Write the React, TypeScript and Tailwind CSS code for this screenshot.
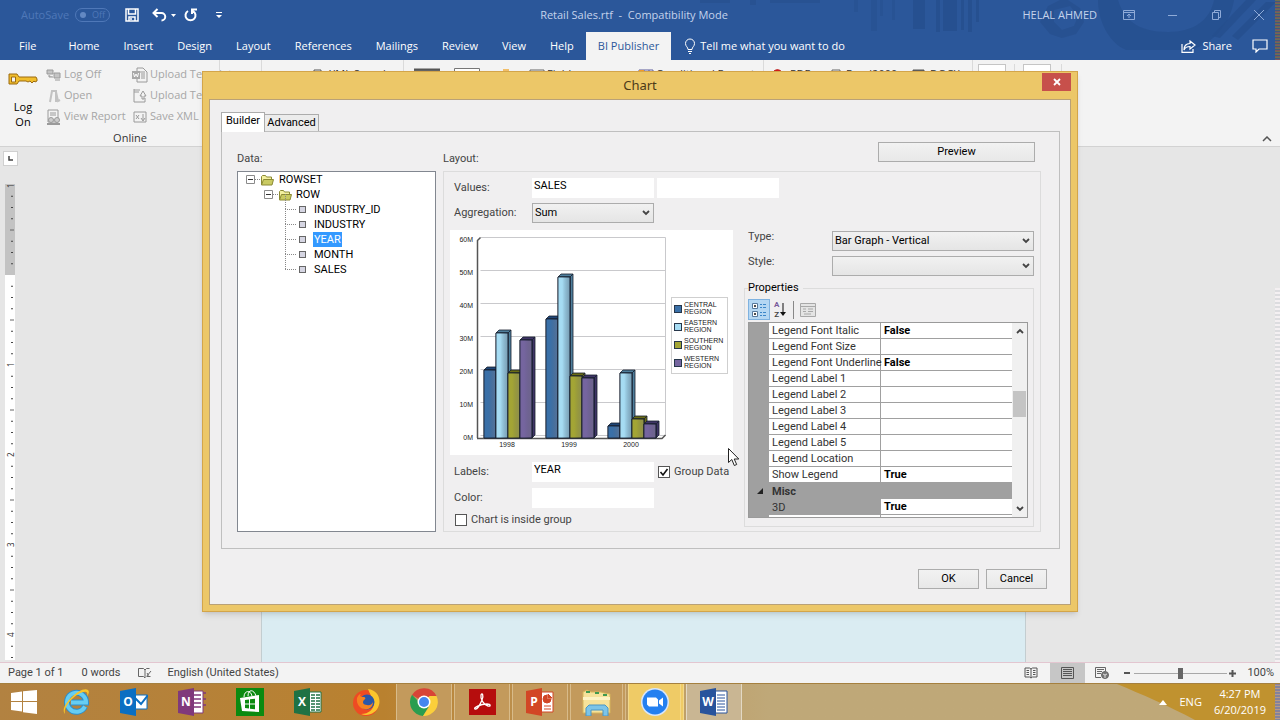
import type { ReactNode } from "react";

const MENU_TABS = ["Home", "Insert", "Design", "Layout", "References", "Mailings", "Review", "View", "Help"];

const TREE_LEAVES = ["INDUSTRY_ID", "INDUSTRY", "YEAR", "MONTH", "SALES"];

const PROPERTIES = [
  { name: "Legend Font Italic", value: "False" },
  { name: "Legend Font Size", value: "" },
  { name: "Legend Font Underline", value: "False" },
  { name: "Legend Label 1", value: "" },
  { name: "Legend Label 2", value: "" },
  { name: "Legend Label 3", value: "" },
  { name: "Legend Label 4", value: "" },
  { name: "Legend Label 5", value: "" },
  { name: "Legend Location", value: "" },
  { name: "Show Legend", value: "True" },
];

const SERIES = [
  { name: "CENTRAL", light: "#3a70a8", dark: "#1f4677" },
  { name: "EASTERN", light: "#a6dcf3", dark: "#4f7f9c" },
  { name: "SOUTHERN", light: "#a3a535", dark: "#6a6c14" },
  { name: "WESTERN", light: "#75659f", dark: "#3f3466" },
];

const CHART_GROUPS = [
  { year: "1998", x: 34, tops: [140, 103, 143, 110] },
  { year: "1999", x: 96, tops: [89, 47, 146, 148] },
  { year: "2000", x: 158, tops: [196, 143, 189, 194] },
];

function BarChart() {
  return (
    <svg width="283" height="225" viewBox="0 0 283 225" className="block bg-white" role="img" aria-label="Bar graph">
      <defs>
        {SERIES.map((s) => (
          <linearGradient id={s.name} key={s.name}>
            <stop offset="0" stopColor={s.light} />
            <stop offset="0.35" stopColor={s.light} />
            <stop offset="1" stopColor={s.dark} stopOpacity="0.75" />
          </linearGradient>
        ))}
      </defs>
      <g stroke="#c9c9cc" fill="none">
        <path d="M30.5 7.5H215.5V205.5" />
        {[40, 73, 106, 139, 172, 205].map((y) => (
          <path key={y} d={`M30.5 ${y + 0.5}H215.5`} />
        ))}
      </g>
      <path d="M30.5 7.5L27.5 10.5V208" stroke="#555" fill="none" strokeWidth="1.5" />
      <path d="M27 208.5H212L215.5 205" stroke="#555" fill="none" strokeWidth="1.5" />
      {CHART_GROUPS.map((group) =>
        SERIES.map((s, i) => {
          const x = group.x + i * 12;
          const top = group.tops[i];
          return (
            <g key={group.year + s.name} stroke="#16202e" strokeWidth="0.8" strokeLinejoin="round">
              <path d={`M${x} ${top}L${x + 3} ${top - 3}H${x + 15}L${x + 12} ${top}Z`} fill={s.dark} />
              <path d={`M${x + 12} ${top}L${x + 15} ${top - 3}V205L${x + 12} 208Z`} fill={s.dark} />
              <path d={`M${x} ${top}H${x + 12}V208H${x}Z`} fill="#fff" />
              <path d={`M${x} ${top}H${x + 12}V208H${x}Z`} fill={`url(#${s.name})`} />
            </g>
          );
        })
      )}
      <g fontFamily="Liberation Sans, sans-serif" fontSize="7" fill="#222">
        {["60M", "50M", "40M", "30M", "20M", "10M", "0M"].map((t, i) => (
          <text key={t} x="23" y={12 + i * 33} textAnchor="end">
            {t}
          </text>
        ))}
        {CHART_GROUPS.map((g) => (
          <text key={g.year} x={g.x + 23} y="217" textAnchor="middle">
            {g.year}
          </text>
        ))}
        <rect x="221.5" y="67.5" width="56" height="76" fill="#fff" stroke="#cfcfcf" />
        {SERIES.map((s, i) => (
          <g key={s.name}>
            <rect x="224.5" y={75.5 + i * 18} width="7" height="7" fill={s.light} stroke="#26364a" />
            <text x="234" y={77 + i * 18}>
              {s.name}
            </text>
            <text x="234" y={84 + i * 18}>
              REGION
            </text>
          </g>
        ))}
      </g>
    </svg>
  );
}

function VerticalRuler() {
  const ticks: number[] = [];
  for (let i = 1; i < 43; i++) ticks.push(i);
  const numbers: Record<number, string> = { 16: "1", 24: "2", 32: "3", 40: "4" };
  return (
    <svg width="10" height="476" viewBox="0 0 10 476" className="block">
      <rect width="10" height="91" fill="#c3c3c3" />
      <rect y="91" width="10" height="385" fill="#fff" />
      {ticks.map((i) => {
        const y = 1 + i * 11.25;
        if (i === 8) return null;
        if (numbers[i]) {
          return (
            <text key={i} transform={`translate(9 ${y + 2}) rotate(-90)`} fontSize="8" fontFamily="Noto Sans, sans-serif" fill="#333">
              {numbers[i]}
            </text>
          );
        }
        return i % 4 === 0 ? (
          <path key={i} d={`M5 ${y}h4`} stroke="#666" />
        ) : (
          <path key={i} d={`M6 ${y}h2`} stroke="#444" />
        );
      })}
      <text transform="translate(9 4) rotate(-90)" fontSize="8" fontFamily="Noto Sans, sans-serif" fill="#333">
        1
      </text>
    </svg>
  );
}

function TitleArt() {
  return (
    <svg width="640" height="60" viewBox="0 0 640 60" className="absolute top-0 right-0" fill="#264f8d" aria-hidden="true">
      <path d="M60 0h30v3h-30zM110 0h6v5h-6zM130 0h50v3h-50z" opacity=".6" />
      <path d="M214 0h4v12h-4zM231 0h6v31h-6zM240 0h3v16h-3zM252 0h3v20h-3z" opacity=".5" />
      <path d="M273 0h12v29h-12zM296 0h4v32h-4zM303 0h14v31h-14zM321 0h3v30h-3zM328 0h4v32h-4zM336 0h3v22h-3z" opacity=".8" />
      <path d="M408 6l12-6h8l12 8 4 14-8 12-14 4-12-4-10-12z M414 10v12l8 8 12-4 4-10-8-10z" fillRule="evenodd" opacity=".7" />
      <path d="M458 0c0 20 10 42 28 50h64c24-6 40-26 44-50h-20c-4 20-20 32-46 32-30 0-44-12-50-32z" opacity=".75" />
      <path d="M572 36l34-36h10l-36 38zM592 36l34-34h10l-38 38z" opacity=".8" />
    </svg>
  );
}

function TitleBar() {
  return (
    <div className="relative flex h-[30px] items-center text-[11px] text-[#c4d3ec]">
      <div className="flex flex-1 items-center pl-[21px] text-white">
        <label htmlFor="autosave" className="text-[#4f78b8]">
          AutoSave
        </label>
        <button id="autosave" className="ml-1.5 flex h-[14px] w-[35px] items-center justify-between rounded-full border border-[#4f78b8] px-1 text-[9px] text-[#4f78b8]">
          <span className="size-1.5 rounded-full bg-[#6288c3]" />
          Off
        </button>
        <button aria-label="Save" className="ml-[15px]">
          <svg width="14" height="14" viewBox="0 0 14 14" fill="none" stroke="white" strokeWidth="1.5">
            <path d="M1 1h12v12H1zM3.500 1v5h7V1M4 13V9h6v4M6 10v2" />
          </svg>
        </button>
        <button aria-label="Undo" className="ml-[13px]">
          <svg width="15" height="14" viewBox="0 0 15 14" fill="none" stroke="white" strokeWidth="2">
            <path d="M5.500 1L1.500 5l4 4M2 5h7.500a3.700 3.700 0 0 1 0 7.500" />
          </svg>
        </button>
        <svg width="5" height="3" viewBox="0 0 5 3" className="ml-1" fill="white">
          <path d="M0 0h5L2.500 3z" />
        </svg>
        <button aria-label="Redo" className="ml-2">
          <svg width="14" height="14" viewBox="0 0 14 14" fill="none" stroke="white" strokeWidth="2">
            <path d="M4 3a5 5 0 1 0 5 0M8 6V1.500h5" />
          </svg>
        </button>
        <svg width="6" height="7" viewBox="0 0 6 7" className="ml-[18px]" fill="white">
          <path d="M0 0h6v1H0zM0 3h6L3 6z" />
        </svg>
      </div>
      <span className="pr-[18px] whitespace-pre">Retail Sales.rtf  -  Compatibility Mode</span>
      <div className="flex flex-1 items-center justify-end pr-[15px]">
        <span>HELAL AHMED</span>
        <svg width="150" height="14" viewBox="0 0 150 14" className="ml-[18px]" fill="none" stroke="#8fabd8">
          <path d="M8.500 2.500h11v9h-11zM8.500 4.500h11M14 10V6M12 8l2-2 2 2M53 7.500h9M97.500 4.500h6v7h-6zM99.500 4V2.500h6v7h-2M139 2l10 10M149 2l-10 10" />
        </svg>
      </div>
    </div>
  );
}

function MenuTabs() {
  return (
    <div className="relative flex h-[30px] items-end text-[11px] text-white">
      <nav className="flex h-[28px] items-center">
        <a href="#file" className="mr-2 pr-3 pl-[19px]">
          File
        </a>
        {MENU_TABS.map((tab) => (
          <a key={tab} href={`#${tab}`} className="px-3">
            {tab}
          </a>
        ))}
        <a href="#bi" className="flex h-full items-center bg-[#f3f3f3] px-3 text-[#2b579a]">
          BI Publisher
        </a>
        <a href="#tell" className="ml-[13px] flex items-center">
          <svg width="12" height="16" viewBox="0 0 12 16" fill="none" stroke="white">
            <path d="M4 11.500C4 9 1.500 8.500 1.500 5.500a4.500 4.500 0 0 1 9 0c0 3-2.500 3.500-2.500 6zM4 13.500h4M5 15.500h2" />
          </svg>
          <span className="ml-1">Tell me what you want to do</span>
        </a>
      </nav>
      <div className="ml-auto flex h-[28px] items-center pr-3">
        <button className="flex items-center">
          <svg width="15" height="13" viewBox="0 0 15 13" fill="none" stroke="white" strokeWidth="1.2">
            <path d="M1 4v8.400h11V9M9 1l5 4-5 4V6.500c-3 0-5 1-6 3.500 0-4 2-6.500 6-6.500z" />
          </svg>
          <span className="ml-1.5">Share</span>
        </button>
        <button aria-label="Comments" className="ml-5">
          <svg width="16" height="14" viewBox="0 0 16 14" fill="none" stroke="white" strokeWidth="1.2">
            <path d="M1 1h14v9H7l-3 3v-3H1z" />
          </svg>
        </button>
      </div>
    </div>
  );
}

function RibbonIcon({ children }: { children: ReactNode }) {
  return (
    <svg width="16" height="16" viewBox="0 0 16 16" fill="none" stroke="#9a9a9a" className="shrink-0">
      {children}
    </svg>
  );
}

function RibbonButton({ label, icon }: { label: string; icon: ReactNode }) {
  return (
    <button className="flex h-[21px] items-center gap-0.5 whitespace-nowrap">
      {icon}
      {label}
    </button>
  );
}

function Ribbon() {
  return (
    <div className="flex h-[87px] shrink-0 overflow-hidden border-b border-[#d2d2d2] bg-[#f3f3f3] text-[11px] text-[#333]">
      <div className="flex w-[219px] shrink-0 flex-col">
        <div className="flex h-[70px] pt-1">
          <button className="flex w-[46px] shrink-0 flex-col items-center pt-2 leading-[15px] text-black">
            <svg width="30" height="15" viewBox="0 0 30 15" className="mb-3">
              <path d="M1 2h8l2 3h17l1 2v2l-2 1-1-1-2 2-2-2-2 1-2-1h-7l-2 3H1z" fill="#f0bd2c" stroke="#9b6b10" />
              <path d="M3.500 5h4v5h-4z" fill="#f3f3f3" stroke="#9b6b10" />
            </svg>
            <span>Log</span>
            <span>On</span>
          </button>
          <div className="flex w-[86px] shrink-0 flex-col text-[#a6a6a6]">
            <RibbonButton
              label="Log Off"
              icon={
                <RibbonIcon>
                  <path d="M1 3h6v4H1zM8 6h6v5H8zM3 8v2h4M9 13h5" fill="#c4c4c4" />
                </RibbonIcon>
              }
            />
            <RibbonButton
              label="Open"
              icon={
                <RibbonIcon>
                  <path d="M4 14l2-11h4v11M10 4l2 9 2-1" stroke="#c2c2c2" strokeWidth="2" />
                </RibbonIcon>
              }
            />
            <RibbonButton
              label="View Report"
              icon={
                <RibbonIcon>
                  <path d="M2 1h10v12H2zM4 4h6M4 6h6" />
                  <circle cx="5" cy="11" r="2.500" fill="#ccc" />
                  <circle cx="11" cy="11" r="2.500" fill="#ccc" />
                  <path d="M1 15h13" strokeWidth="2" />
                </RibbonIcon>
              }
            />
          </div>
          <div className="flex flex-col text-[#a6a6a6]">
            <RibbonButton
              label="Upload Template"
              icon={
                <RibbonIcon>
                  <path d="M5 1h6l4 4v10H5zM8 5h5M9 7h4M9 9h4M9 11h4" />
                  <path d="M0 4h8v8H0z" fill="#a9a9a9" stroke="none" />
                  <path d="M1.500 6l1 4 1.500-3 1.500 3 1-4" stroke="white" />
                </RibbonIcon>
              }
            />
            <RibbonButton
              label="Upload Template As"
              icon={
                <RibbonIcon>
                  <path d="M2 4h5M2 2h6M2 1v13h11v-4M8 8l3-5 3 5h-2v3h-2V8z" />
                </RibbonIcon>
              }
            />
            <RibbonButton
              label="Save XML"
              icon={
                <RibbonIcon>
                  <path d="M2 3h12v10H2zM4 6l3 4M7 6l-3 4M11 5v6M9 9l2 3 2-3" />
                </RibbonIcon>
              }
            />
          </div>
        </div>
        <span className="pl-[41px] text-center">Online</span>
      </div>
      <div className="w-[43px] shrink-0 border-x border-[#dadada]" />
      <div className="flex w-[142px] shrink-0 border-r border-[#dadada] pt-1 pl-[49px]">
        <RibbonButton label="XML Sample" icon={<RibbonIcon><path d="M3 3h7v10H3z" stroke="#555" /></RibbonIcon>} />
      </div>
      <div className="flex w-[360px] shrink-0 border-r border-[#dadada] pt-1">
        <svg width="100" height="22" viewBox="0 0 100 22" fill="none" className="ml-[9px]">
          <path d="M1 6h26" stroke="#555" strokeWidth="3" />
          <path d="M1 7h26v12H1z" stroke="#777" />
          <path d="M41.500 4.500h25v14h-25z" stroke="#777" fill="#fff" />
          <path d="M44 8h20" stroke="#999" />
          <path d="M90 5h6v14h-6z" fill="#f2bf6a" />
        </svg>
        <div className="ml-4 flex w-[109px]">
          <RibbonButton label="Field" icon={<RibbonIcon><path d="M1 3h14v10H1zM4 6v4M8 6v4M11 6v4" stroke="#666" /></RibbonIcon>} />
        </div>
        <RibbonButton
          label="Conditional Format"
          icon={
            <RibbonIcon>
              <path d="M1 3h14v10H1zM1 7h14M6 3v10M11 3v10" stroke="#5a5a9a" fill="#fff" />
              <path d="M1 3h5v5H1z" fill="#f09a2c" stroke="none" />
            </RibbonIcon>
          }
        />
      </div>
      <div className="flex w-[209px] shrink-0 border-r border-[#dadada] pt-1 pl-2">
        <div className="w-[56px]">
          <RibbonButton label="PDF" icon={<RibbonIcon><path d="M2 4c4-3 8 0 9 3H2z" fill="#d22" stroke="#b11" /></RibbonIcon>} />
        </div>
        <div className="w-[84px]">
          <RibbonButton label="Excel2000" icon={<RibbonIcon><path d="M4 3h8v4H4zM1 6h14v6H1z" stroke="#666" /></RibbonIcon>} />
        </div>
        <RibbonButton label="DOCX" icon={<RibbonIcon><path d="M1 3h11v2H1z" fill="#666" stroke="#555" /><path d="M4 7h10v6H4z" stroke="#557" /></RibbonIcon>} />
      </div>
      <div className="flex shrink-0 gap-2 pt-1 pl-[5px]">
        <span className="h-10 w-7 border border-[#c5c5c5] bg-white" />
        <span className="h-14 w-px bg-[#dadada]" />
        <span className="h-10 w-7 border border-[#c5c5c5] bg-white" />
        <span className="ml-0.5 h-14 w-px bg-[#dadada]" />
      </div>
      <button aria-label="Collapse ribbon" className="mt-auto mr-2 mb-1 ml-auto">
        <svg width="10" height="6" viewBox="0 0 10 6" fill="none" stroke="#555" strokeWidth="1.5">
          <path d="M1 5l4-4 4 4" />
        </svg>
      </button>
    </div>
  );
}

function Chevron({ up = false }: { up?: boolean }) {
  return (
    <svg width="8" height="6" viewBox="0 0 8 6" fill="none" stroke="#444" strokeWidth="1.8">
      <path d={up ? "M1 5l3-3 3 3" : "M1 1l3 3 3-3"} />
    </svg>
  );
}

function SelectBox({ id, value, className }: { id: string; value: string; className: string }) {
  return (
    <div className={`relative h-5 ${className}`}>
      <select
        id={id}
        defaultValue={value}
        className="block h-5 w-full appearance-none border border-[#acacac] bg-linear-to-b from-[#f1f1f1] to-[#e5e5e5] pl-0.5 text-[11px] text-black"
      >
        <option>{value}</option>
      </select>
      <span className="pointer-events-none absolute top-[7px] right-1">
        <Chevron />
      </span>
    </div>
  );
}

function CheckBox({ id, label, checked }: { id: string; label: string; checked: boolean }) {
  return (
    <div className="flex h-5 items-center gap-1 whitespace-nowrap">
      <div className="relative size-3">
        <input id={id} type="checkbox" defaultChecked={checked} className="peer block size-3 appearance-none border border-[#555] bg-white" />
        <svg width="12" height="12" viewBox="0 0 12 12" fill="none" stroke="#111" strokeWidth="1.6" className="pointer-events-none absolute inset-0 hidden peer-checked:block">
          <path d="M2.500 6l2.500 3 4.500-6" />
        </svg>
      </div>
      <label htmlFor={id}>{label}</label>
    </div>
  );
}

function Expander() {
  return (
    <svg width="9" height="9" viewBox="0 0 9 9" fill="white" stroke="#8a8a8a">
      <path d="M.5 .5h8v8h-8z" />
      <path d="M2 4.500h5" stroke="#333" />
    </svg>
  );
}

function Folder() {
  return (
    <svg width="14" height="12" viewBox="0 0 14 12" stroke="#8b8a34">
      <path d="M1.500 10.500v-8l1-1h3l1 1.500h5v7.500z" fill="#f3f0a0" />
      <path d="M3.500 5.500h10l-1.500 5.500H1.500z" fill="#c9ca62" />
    </svg>
  );
}

function DataTree() {
  return (
    <div className="min-h-[361px] flex-1 border border-[#828790] bg-white text-[11px] leading-[15px] text-black">
      <ul>
        <li>
          <div className="flex h-[15px] items-center pl-2">
            <Expander />
            <span className="w-[5px] border-t border-dotted border-[#888]" />
            <Folder />
            <span className="ml-[5px]">ROWSET</span>
          </div>
          <ul>
            <li>
              <div className="flex h-[15px] items-center pl-[26px]">
                <Expander />
                <span className="w-[5px] border-t border-dotted border-[#888]" />
                <Folder />
                <span className="ml-1">ROW</span>
              </div>
              <ul className="pl-[47px]">
                {TREE_LEAVES.map((leaf) => (
                  <li
                    key={leaf}
                    className="relative flex h-[15px] items-center before:absolute before:-top-2 before:left-0 before:h-[15px] before:border-l before:border-dotted before:border-[#888]"
                  >
                    <span className="w-[11px] border-t border-dotted border-[#888]" />
                    <span className="ml-[3px] size-[7px] border border-[#666] bg-[#d5d5e2]" />
                    <span className={leaf === "YEAR" ? "ml-[7px] bg-[#3399ff] px-px text-white" : "ml-[7px] px-px"}>{leaf}</span>
                  </li>
                ))}
              </ul>
            </li>
          </ul>
        </li>
      </ul>
    </div>
  );
}

function PropertyGrid() {
  return (
    <div className="flex h-[196px] overflow-hidden border border-[#9a9a9a] bg-white">
      <div className="flex-1">
        <table className="w-full table-fixed border-separate border-spacing-0 text-[11px] leading-[15px] text-[#333]">
          <colgroup>
            <col className="w-5" />
            <col className="w-[112px]" />
            <col />
          </colgroup>
          <tbody>
            {PROPERTIES.map((p) => (
              <tr key={p.name} className="h-4">
                <td className="bg-[#a0a0a0] p-0" />
                <td className="border-r border-b border-[#a0a0a0] p-0 pl-[3px] whitespace-nowrap">{p.name}</td>
                <td className="border-b border-[#a0a0a0] p-0 pl-[3px] font-bold text-black">{p.value}</td>
              </tr>
            ))}
            <tr className="h-4 bg-[#a0a0a0]">
              <td className="p-0">
                <svg width="6" height="6" viewBox="0 0 6 6" className="ml-2">
                  <path d="M6 0v6H0z" fill="#222" />
                </svg>
              </td>
              <th colSpan={2} className="p-0 pl-[3px] text-left font-bold">
                Misc
              </th>
            </tr>
            <tr className="h-4">
              <td className="bg-[#a0a0a0] p-0" />
              <td className="bg-[#a0a0a0] p-0 pl-[3px]">3D</td>
              <td className="border-b border-[#a0a0a0] p-0 pl-[3px] font-bold text-black">True</td>
            </tr>
            <tr className="h-4">
              <td className="bg-[#a0a0a0] p-0" />
              <td className="border-r border-[#a0a0a0] p-0" />
              <td className="p-0" />
            </tr>
          </tbody>
        </table>
      </div>
      <div className="flex w-[15px] shrink-0 flex-col items-center bg-[#f0f0f0] py-[5px]">
        <Chevron up />
        <span className="mt-[57px] h-[26px] w-[13px] bg-[#c4c4c4]" />
        <span className="mt-auto">
          <Chevron />
        </span>
      </div>
    </div>
  );
}

const FIELD = "h-5 w-[122px] bg-white px-0.5 pb-1.5 text-[11px] text-black";
const BUTTON = "h-5 border border-[#acacac] bg-linear-to-b from-[#f2f2f2] to-[#e8e8e8] text-black";

function LayoutPane() {
  return (
    <div className="flex-1 border border-[#dcdcdc] pt-1.5 pr-1.5 pl-1.5">
      <div className="flex h-5 items-center">
        <label htmlFor="values" className="w-[82px] pl-1">
          Values:
        </label>
        <input id="values" defaultValue="SALES" className={FIELD} />
        <input aria-label="Second value" className={`ml-[3px] ${FIELD}`} />
      </div>
      <div className="flex gap-[11px]">
        <div className="w-[283px] shrink-0 pt-[5px]">
          <div className="flex items-center">
            <label htmlFor="aggregation" className="w-[82px] pl-1">
              Aggregation:
            </label>
            <SelectBox id="aggregation" value="Sum" className="w-[122px]" />
          </div>
          <div className="mt-[7px] mb-[7px]">
            <BarChart />
          </div>
          <div className="flex items-center">
            <label htmlFor="labels" className="w-[82px] pl-1">
              Labels:
            </label>
            <input id="labels" defaultValue="YEAR" className={`mr-1 ${FIELD}`} />
            <CheckBox id="group-data" label="Group Data" checked />
          </div>
          <div className="mt-1.5 mb-0.5 flex items-center">
            <label htmlFor="color" className="w-[82px] pl-1">
              Color:
            </label>
            <input id="color" className={FIELD} />
          </div>
          <div className="pl-[5px]">
            <CheckBox id="inside-group" label="Chart is inside group" checked={false} />
          </div>
        </div>
        <div className="flex-1 pt-[33px]">
          <div className="flex justify-between">
            <label htmlFor="type" className="pl-1 leading-3">
              Type:
            </label>
            <SelectBox id="type" value="Bar Graph - Vertical" className="w-[202px]" />
          </div>
          <div className="mt-[5px] flex justify-between">
            <label htmlFor="style" className="pl-1 leading-3">
              Style:
            </label>
            <SelectBox id="style" value="" className="w-[202px]" />
          </div>
          <fieldset className="mt-1 border border-[#dcdcdc] pr-[5px] pb-2 pl-[3px]">
            <legend className="pr-1 leading-4 text-black">Properties</legend>
            <div className="mt-[3px] mb-0.5 flex h-[21px] items-center gap-1">
              <button aria-label="Categorized" className="flex h-[21px] w-[22px] items-center justify-center border border-[#7fb2e0] bg-[#b5d7f3]">
                <svg width="16" height="16" viewBox="0 0 16 16" fill="white" stroke="#56789c">
                  <path d="M1.500 1.500h5v5h-5zM1.500 9.500h5v5h-5z" />
                  <path d="M3 4h2M4 3v2M3 12h2M4 11v2" stroke="#111" />
                  <path d="M9 2.500h2M12 2.500h3M9 5.500h2M12 5.500h3M9 10.500h2M12 10.500h3M9 13.500h2M12 13.500h3" stroke="#3c86c8" />
                </svg>
              </button>
              <button aria-label="Alphabetical" className="flex items-center text-[8px] leading-[10px] font-bold">
                <span className="flex flex-col">
                  <span className="text-[#7a5a9a]">A</span>
                  <span className="text-[#444]">Z</span>
                </span>
                <svg width="8" height="14" viewBox="0 0 8 14" fill="#111">
                  <path d="M3.500 0h1v9H7l-3 4-3-4h2.500z" />
                </svg>
              </button>
              <span className="ml-0.5 h-[18px] w-px bg-[#888]" />
              <button aria-label="Property pages" className="ml-0.5">
                <svg width="16" height="14" viewBox="0 0 16 14" fill="#e4e4e4" stroke="#a8a8a8">
                  <path d="M.5 .5h15v13H.5zM.5 3.500h15" />
                  <path d="M3 6h3M8 6h5M3 8.500h3M8 8.500h5M4 11h7" />
                </svg>
              </button>
            </div>
            <PropertyGrid />
          </fieldset>
        </div>
      </div>
    </div>
  );
}

function ChartDialog() {
  return (
    <div
      role="dialog"
      aria-label="Chart"
      className="w-[876px] border border-[#d3a54a] bg-[#ecc768] px-1.5 pb-1.5 font-['Roboto','DejaVu_Sans',sans-serif] text-[11px] text-[#444] shadow-md"
    >
      <div className="relative flex h-[27px] items-center justify-center font-['Noto_Sans',sans-serif] text-[13px] text-[#4c3a18]">
        <h1>Chart</h1>
        <button aria-label="Close" className="absolute top-px right-0 flex h-[18px] w-[29px] items-center justify-center bg-[#c7504b]">
          <svg width="8" height="8" viewBox="0 0 8 8" stroke="white" strokeWidth="1.800">
            <path d="M1 1l6 6M7 1L1 7" />
          </svg>
        </button>
      </div>
      <div className="border border-[#b9a177] bg-[#f0eff0] pt-3 pr-2.5 pb-[15px] pl-[11px]">
        <div role="tablist" className="flex items-end text-black">
          <button role="tab" aria-selected="true" className="relative -mb-px h-5 w-[44px] border border-b-0 border-[#acacac] bg-white pb-0.5">
            Builder
          </button>
          <button role="tab" aria-selected="false" className="h-[17px] w-[54px] border border-b-0 border-l-0 border-[#acacac] bg-[#ececec] leading-4">
            Advanced
          </button>
        </div>
        <div className="flex gap-[7px] border border-[#bfbfbf] pr-[18px] pb-4 pl-[15px]">
          <div className="flex w-[199px] shrink-0 flex-col">
            <div className="flex h-[39px] items-end pb-1 leading-4">Data:</div>
            <DataTree />
          </div>
          <div className="flex flex-1 flex-col">
            <div className="flex h-[39px] items-end justify-between pr-1.5 pb-1 leading-4">
              Layout:
              <button className={`mb-[5px] w-[157px] ${BUTTON}`}>Preview</button>
            </div>
            <LayoutPane />
          </div>
        </div>
        <div className="mt-5 flex justify-end gap-[7px] pr-[13px]">
          <button className={`w-[61px] ${BUTTON}`}>OK</button>
          <button className={`w-[61px] ${BUTTON}`}>Cancel</button>
        </div>
      </div>
    </div>
  );
}

function StatusBar() {
  return (
    <div className="flex h-[21px] shrink-0 items-center border-t border-[#e3c6d0] bg-[#f3f3f3] font-['Roboto',sans-serif] text-[11px] text-[#444]">
      <span className="ml-2">Page 1 of 1</span>
      <span className="ml-[18px]">0 words</span>
      <svg width="14" height="12" viewBox="0 0 14 12" className="ml-[17px]" fill="none" stroke="#666">
        <path d="M7 2v9L5.500 9.500H.5v-8h5L7 3l1.500-1.500h3M8.500 9.500L13 4M9 6l1.500 2.500M12.500 9.500H9" />
      </svg>
      <span className="ml-4">English (United States)</span>
      <div className="ml-auto flex h-full items-center">
        <svg width="14" height="12" viewBox="0 0 14 12" fill="none" stroke="#555" className="mr-3">
          <path d="M7 2v9M7 2L5.500 1H1v9h4.500L7 11l1.500-1H13V1H8.500zM2.500 3.500H5M2.500 5.500H5M2.500 7.500H5M9 3.500h2.500M9 5.500h2.500M9 7.500h2.500" />
        </svg>
        <span className="flex h-full w-[35px] items-center justify-center bg-[#c6c6c6]">
          <svg width="13" height="12" viewBox="0 0 13 12" fill="none" stroke="#555">
            <path d="M.5 .5h12v11H.5zM2 2.500h9M2 4.500h9M2 6.500h9M2 8.500h9" />
          </svg>
        </span>
        <svg width="14" height="12" viewBox="0 0 14 12" fill="none" stroke="#666" className="ml-2.5">
          <path d="M6 10.500H.5v-10h10V4M2 2.500h7M2 4.500h5M2 6.500h4" />
          <circle cx="10" cy="8" r="3.500" fill="#777" />
          <path d="M8 7l2 1 2-1M10 8v3" stroke="#ddd" />
        </svg>
        <button aria-label="Zoom out" className="ml-[15px] h-[2px] w-[6px] bg-[#555]" />
        <input
          type="range"
          aria-label="Zoom"
          defaultValue={50}
          className="mr-0.5 ml-1 h-[11px] w-[93px] appearance-none bg-linear-to-b from-transparent via-[#a8a8a8] via-50% to-transparent bg-[length:100%_1px] bg-center bg-no-repeat [&::-webkit-slider-thumb]:h-[11px] [&::-webkit-slider-thumb]:w-[5px] [&::-webkit-slider-thumb]:appearance-none [&::-webkit-slider-thumb]:bg-[#666]"
        />
        <button aria-label="Zoom in">
          <svg width="7" height="7" viewBox="0 0 7 7" stroke="#555" strokeWidth="2">
            <path d="M0 3.500h7M3.500 0v7" />
          </svg>
        </button>
        <span className="mr-1.5 ml-[11px]">100%</span>
      </div>
    </div>
  );
}

function OfficeIcon({ letter, color, children }: { letter: string; color: string; children: ReactNode }) {
  return (
    <svg width="28" height="28" viewBox="0 0 28 28">
      {children}
      <path d="M0 3L16 0v28L0 25z" fill={color} />
      <text x="8" y="18" textAnchor="middle" fontSize="12" fontWeight="bold" fill="white" fontFamily="Open Sans, sans-serif">
        {letter}
      </text>
    </svg>
  );
}

const APPS: { name: string; frame: string; icon: ReactNode }[] = [
  {
    name: "Internet Explorer",
    frame: "",
    icon: (
      <svg width="30" height="28" viewBox="0 0 30 28" fill="none">
        <path d="M24 18.500A9.500 9.500 0 1 1 25 14.500H10" stroke="#2a8fcf" strokeWidth="6" />
        <path d="M24 18.500A9.500 9.500 0 1 1 25 14.500H10" stroke="#66cdf2" strokeWidth="4" />
        <path d="M4 26C-3 19 20-3 27 2c2 2 0 5-1 7 1-4 0-6-3-5C15 5 2 18 4 26z" fill="#f7c52b" />
      </svg>
    ),
  },
  {
    name: "Outlook",
    frame: "",
    icon: (
      <OfficeIcon letter="O" color="#0b6fc2">
        <path d="M14 7h13v14H14z" fill="white" stroke="#0b6fc2" />
        <path d="M15 10l6 6 7-9" stroke="#0b6fc2" strokeWidth="2" fill="none" />
      </OfficeIcon>
    ),
  },
  {
    name: "OneNote",
    frame: "",
    icon: (
      <OfficeIcon letter="N" color="#80397b">
        <path d="M14 3h11v22H14z" fill="white" stroke="#80397b" />
        <path d="M16 7h7M16 11h7M16 15h7M16 19h7M25 5h3M25 11h3M25 17h3" stroke="#80397b" strokeWidth="1.500" />
      </OfficeIcon>
    ),
  },
  {
    name: "Store",
    frame: "",
    icon: (
      <svg width="28" height="28" viewBox="0 0 28 28" fill="none">
        <path d="M0 0h28v28H0z" fill="#0b8a10" />
        <path d="M4 10l19-3v17L6 23z" fill="white" />
        <path d="M8 9c0-7 7-7 8-1M12 8c0-7 6-7 8 0" stroke="white" />
        <path d="M9 12l4-.5v4H9zM14 11.300l5-.6v4.800h-5zM9 16.500h4v4l-4-.4zM14 16.500h5v4.800l-5-.6z" fill="#0b8a10" />
      </svg>
    ),
  },
  {
    name: "Excel",
    frame: "",
    icon: (
      <OfficeIcon letter="X" color="#1f7244">
        <path d="M14 4h13v20H14z" fill="white" stroke="#1f7244" />
        <path d="M17 7h9M17 10h9M17 13h9M17 16h9M17 19h9M17 22h9" stroke="#1f7244" strokeWidth="1.500" />
        <path d="M21.500 5v18" stroke="white" />
      </OfficeIcon>
    ),
  },
  {
    name: "Firefox",
    frame: "",
    icon: (
      <svg width="28" height="28" viewBox="0 0 28 28">
        <circle cx="14" cy="15" r="13" fill="#ee4b23" />
        <path d="M16 1c9 1 13 9 11 16-2 8-11 12-18 9 8 0 13-5 13-11 0-4-3-6-6-14z" fill="#fbc52c" />
        <circle cx="15" cy="14" r="7.500" fill="#2a57a8" />
        <path d="M9 6c-2 2 0 3 2 3 3 0 3 2 1 3-2 2-1 5 3 5 3 1 5-1 6-3 0 5-4 8-8 7-5 0-9-5-8-11 1-2 2-4 4-4z" fill="#f58220" />
      </svg>
    ),
  },
  {
    name: "Chrome",
    frame: "border-r border-l border-[#d8bb8a] bg-[#c39a5c]",
    icon: (
      <svg width="28" height="28" viewBox="0 0 28 28">
        <path d="M14 14L2 7a14 14 0 0 1 24.500 1z" fill="#d84437" />
        <path d="M14 14h-5L2 6.800A14 14 0 0 0 13 28l6-10z" fill="#2a9d4f" />
        <path d="M14 14l5.500-6h7A14 14 0 0 1 13 28l6-9z" fill="#fbcf3b" />
        <circle cx="14" cy="14" r="6.500" fill="white" />
        <circle cx="14" cy="14" r="5" fill="#4585ef" />
      </svg>
    ),
  },
  {
    name: "Acrobat",
    frame: "border-r border-l border-[#d8bb8a] bg-[#c39a5c]",
    icon: (
      <svg width="27" height="26" viewBox="0 0 27 26" fill="none">
        <path d="M0 0h27v26H0z" fill="#b60d0d" />
        <path d="M6 20c-2-1 5-5 12-5 4 0 4 3 1 2-4-1-8-7-7-11 1-3 3 0 1 5-2 5-5 10-7 9z" stroke="white" strokeWidth="1.300" />
      </svg>
    ),
  },
  {
    name: "PowerPoint",
    frame: "border-r border-l border-[#d8bb8a] bg-[#c39a5c]",
    icon: (
      <OfficeIcon letter="P" color="#d24625">
        <path d="M14 4h13v20H14z" fill="white" stroke="#d24625" />
        <path d="M21 7a4 4 0 1 0 4 4h-4zM22 6v4h4zM18 18h7M18 21h7" fill="#d24625" stroke="#d24625" />
      </OfficeIcon>
    ),
  },
  {
    name: "File Explorer",
    frame: "border-r-4 border-l border-double border-[#d8bb8a] bg-[#c39a5c]",
    icon: (
      <svg width="30" height="28" viewBox="0 0 30 28">
        <path d="M1 4l4-2 4 2h10l3 1 6 1v19H1z" fill="#f6e29a" stroke="#d6b45a" />
        <path d="M4 3h4v2H4zM13 4h4v2h-4zM21 6h4v2h-4z" fill="#3f9a50" />
        <path d="M1 9h27v3H1z" fill="#fdf3c4" />
        <path d="M4 28v-8l3-3h16l3 3v8h-5v-6H9v6z" fill="#7cc4e8" stroke="#4a96c4" />
      </svg>
    ),
  },
  {
    name: "Zoom",
    frame: "border-r-4 border-l border-double border-[#f3d98a] bg-[#efcb66]",
    icon: (
      <svg width="28" height="28" viewBox="0 0 28 28">
        <circle cx="14" cy="14" r="14" fill="#d8e6fa" />
        <circle cx="14" cy="14" r="12.500" fill="#2480f0" />
        <path d="M6 9.500h9l2 2v7H8l-2-2zM18 12.500l4-3v9l-4-3z" fill="white" />
      </svg>
    ),
  },
  {
    name: "Word",
    frame: "border-r border-l border-[#e3d9c4] bg-[#c9b693]",
    icon: (
      <OfficeIcon letter="W" color="#28539c">
        <path d="M14 3h13v22H14z" fill="white" stroke="#28539c" />
        <path d="M17 7h8M17 10h8M17 13h8M17 16h8M17 19h8M17 22h8" stroke="#28539c" />
      </OfficeIcon>
    ),
  },
];

function Taskbar() {
  return (
    <div className="relative flex h-[37px] shrink-0 items-stretch border-t border-[#a5803f] bg-linear-to-r from-[#b28241] via-[#b9812f] via-30% to-[#bfa878] to-60% text-[11px] text-white">
      <svg width="185" height="36" viewBox="0 0 185 36" preserveAspectRatio="none" className="absolute right-0 bottom-0" aria-hidden="true">
        <path d="M22 0c24 10 52 22 78 36h85V0z" fill="#c0922f" />
      </svg>
      <button aria-label="Start" className="flex w-[47px] items-center justify-center">
        <svg width="26" height="24" viewBox="0 0 26 24" fill="white">
          <path d="M0 3l11-1.500V11H0zM12 1.300L26 0v11H12zM0 12h11v9.500L0 20zM12 12h14v12l-14-1.800z" />
        </svg>
      </button>
      {APPS.map((app) => (
        <button key={app.name} aria-label={app.name} className="flex w-[58px] items-center justify-center px-px">
          <span className={`flex h-full w-full items-center justify-center ${app.frame}`}>{app.icon}</span>
        </button>
      ))}
      <div className="relative ml-auto flex items-center pr-[14px]">
        <svg width="8" height="5" viewBox="0 0 8 5" fill="white">
          <path d="M4 0l4 5H0z" />
        </svg>
        <span className="ml-3">ENG</span>
        <div className="ml-3 text-center leading-4">
          <div>4:27 PM</div>
          <div>6/20/2019</div>
        </div>
      </div>
    </div>
  );
}

export default function App() {
  return (
    <div className="relative flex h-screen min-h-[720px] flex-col overflow-hidden bg-[#e6e6e6] font-['Open_Sans','Noto_Sans',sans-serif]">
      <header className="relative shrink-0 bg-[#2b579a]">
        <TitleArt />
        <TitleBar />
        <MenuTabs />
      </header>
      <Ribbon />
      <main className="flex flex-1">
        <div className="w-[18px] shrink-0 pt-1 pl-[3px]">
          <div className="mb-[18px] flex size-[15px] items-center justify-center border border-[#d0d0d0] bg-white">
            <svg width="5" height="5" viewBox="0 0 5 5" fill="none" stroke="#444" strokeWidth="1.500">
              <path d="M1 0v4h4" />
            </svg>
          </div>
          <div className="pl-0.5">
            <VerticalRuler />
          </div>
        </div>
        <div className="flex flex-1 justify-center pt-10 pr-3">
          <div className="w-[765px] border-x border-[#c3cdd0] bg-[#daecf2]" />
        </div>
      </main>
      <StatusBar />
      <Taskbar />
      <div className="absolute inset-x-0 top-[71px] flex justify-center">
        <ChartDialog />
      </div>
      <div className="absolute top-0 right-0 h-[60px] w-[5px] bg-[repeating-linear-gradient(#6b6f52_0_1px,#3e5a7c_1px_2px,#7a5560_2px_3px)]" />
      <div className="absolute top-[288px] right-0 bottom-[58px] w-[5px] bg-[repeating-linear-gradient(#f4f0f2_0_2px,#dcdcdf_2px_4px)]" />
      <div className="absolute right-0 bottom-0 h-[36px] w-[5px] bg-[repeating-linear-gradient(#8a7f9a_0_1px,#b79a86_1px_2px,#7d86a0_2px_3px)]" />
      <svg width="12" height="19" viewBox="0 0 12 19" className="absolute top-[448px] left-[728px]" fill="white" stroke="#222">
        <path d="M.5 .5v14l3.300-3 2.500 6 2.400-1-2.500-5.500h4.600z" />
      </svg>
    </div>
  );
}
